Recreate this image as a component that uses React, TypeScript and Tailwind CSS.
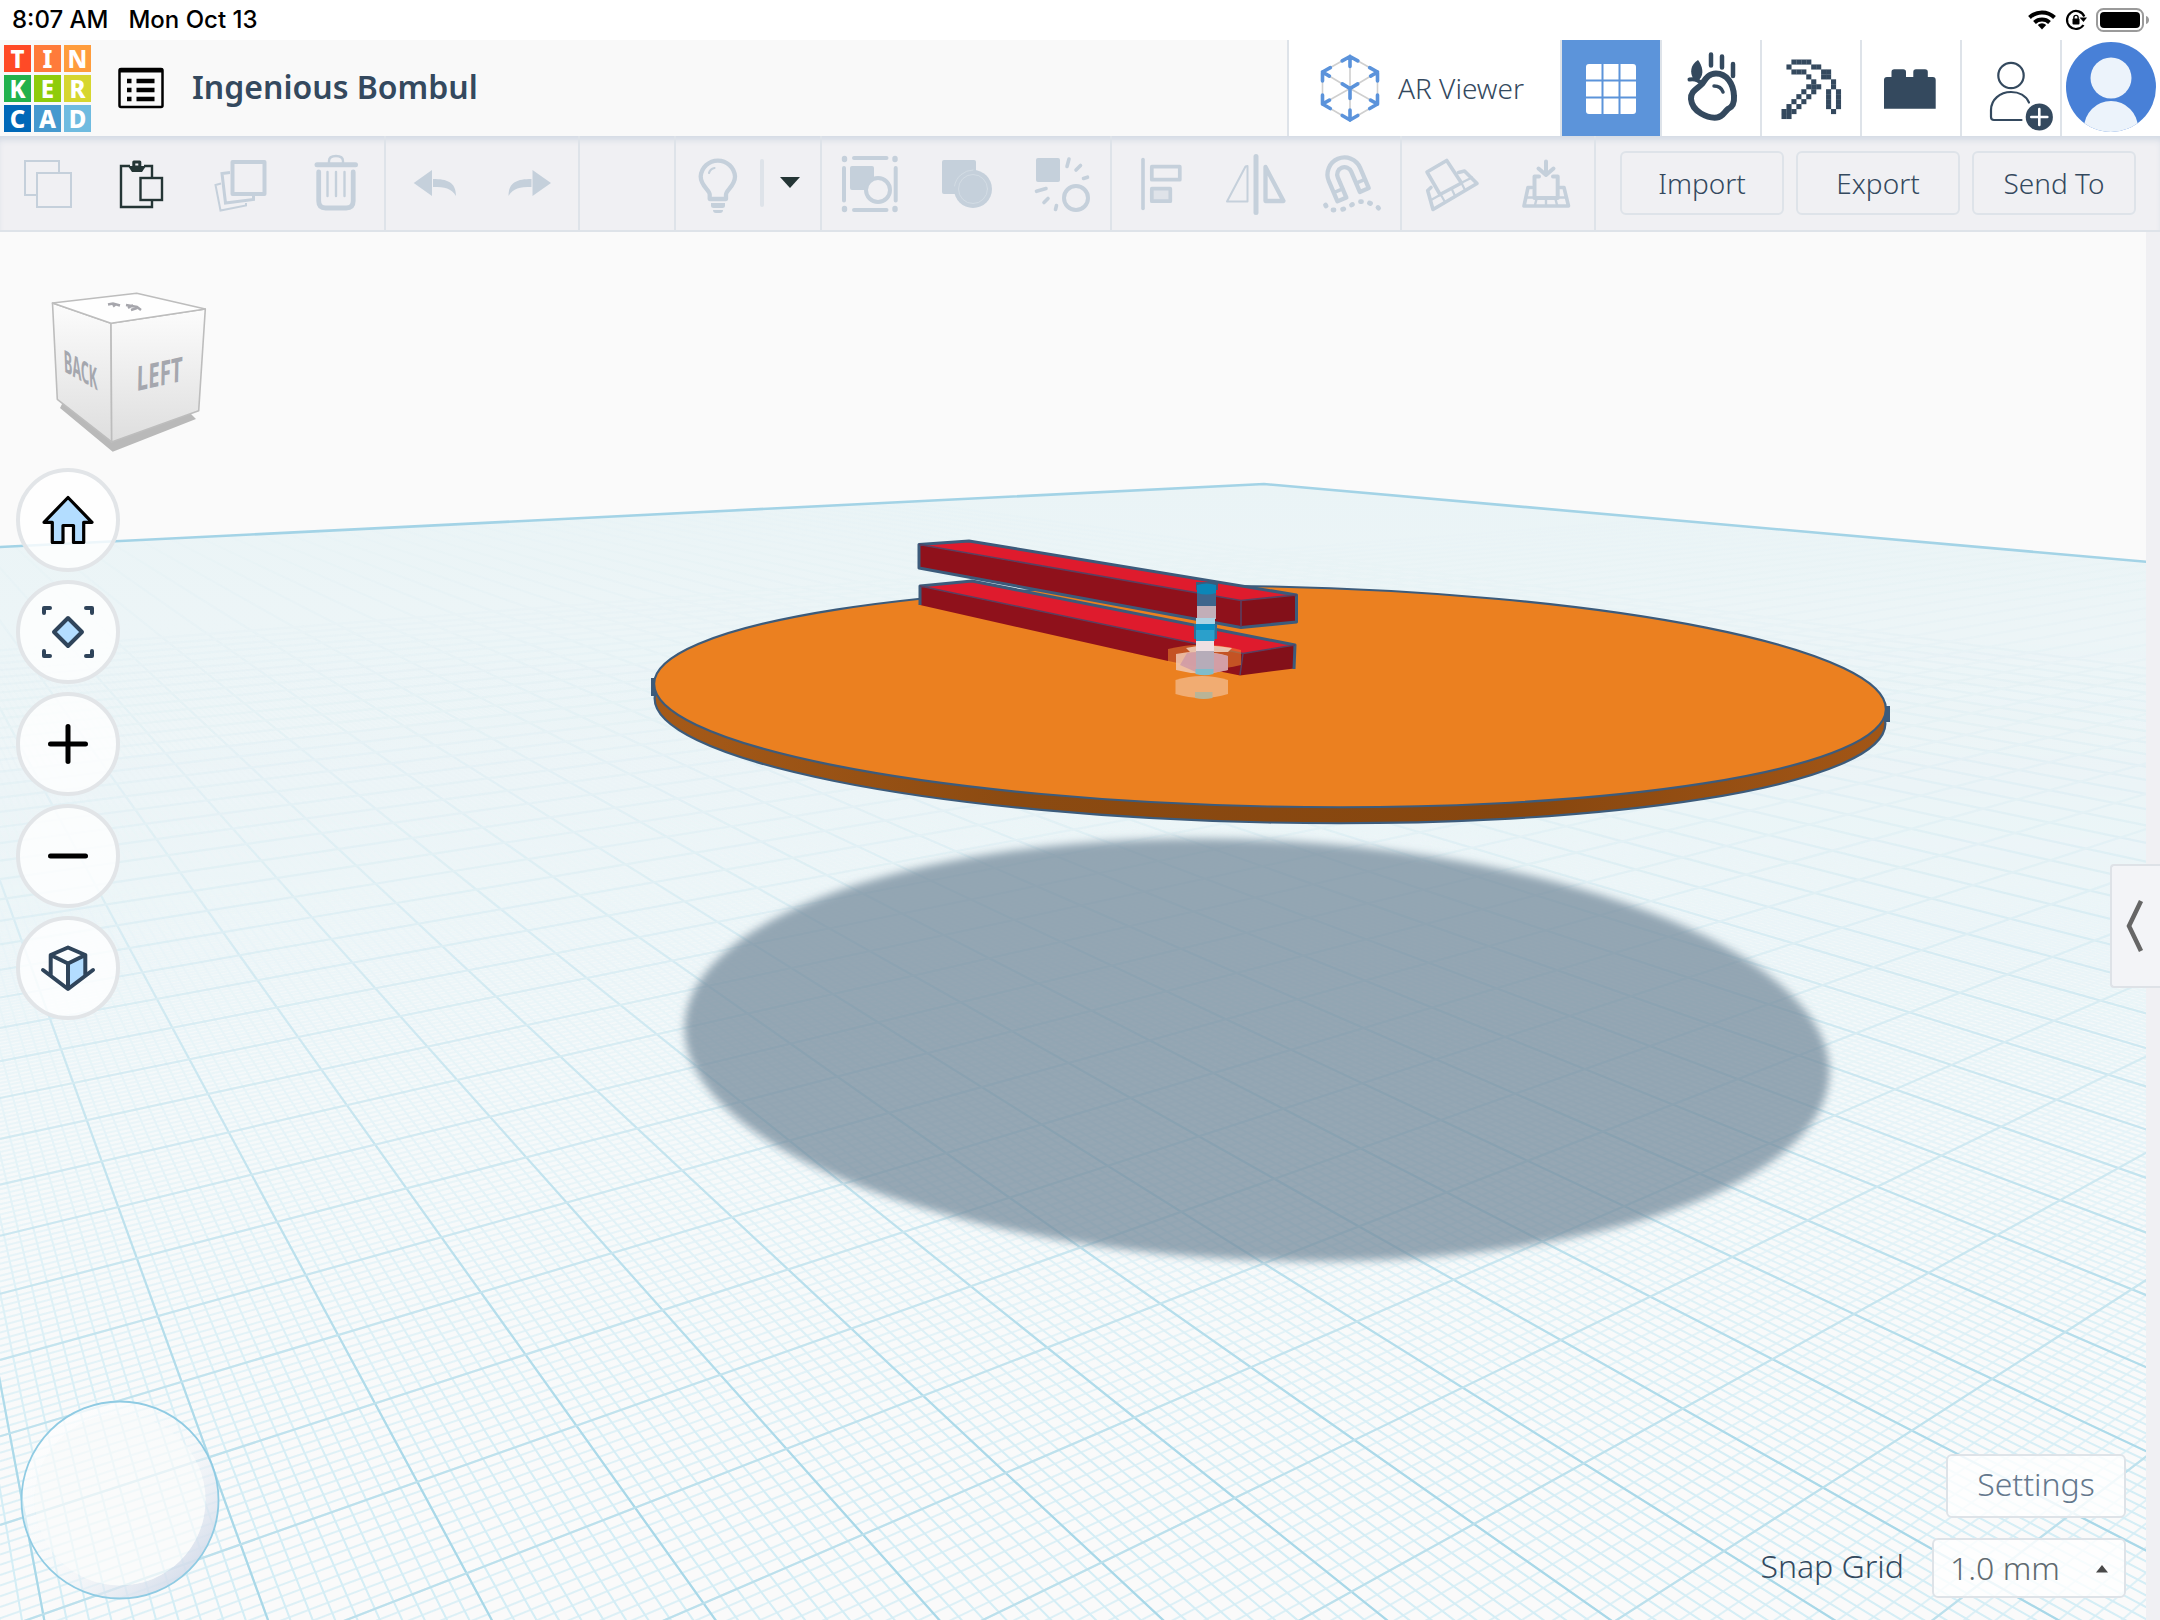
import type { ReactNode } from "react";

const MUTED = "#c5d0db";
const INK = "#34495e";

/* ---------- shared pieces ---------- */

type ArtProps = { box: string; w: string; children: ReactNode };

function Art({ box, w, children }: ArtProps) {
  return (
    <svg viewBox={box} className={w} fill="none" aria-hidden="true">
      {children}
    </svg>
  );
}

function Tool({ label, x, children }: { label: string; x: number; children: ReactNode }) {
  return (
    <button type="button" aria-label={label} className="flex h-full w-24 items-center justify-center">
      <Art box={`${x} 136 96 94`} w="w-24">
        <g stroke={MUTED} strokeLinecap="round" strokeLinejoin="round">
          {children}
        </g>
      </Art>
    </button>
  );
}

function ToolSection({ children }: { children?: ReactNode }) {
  return <div className="flex h-full shrink-0 border-r-2 border-[#dee3e9]">{children}</div>;
}

/* ---------- status bar ---------- */

function StatusBar() {
  return (
    <div className="flex h-10 shrink-0 items-center bg-white pr-2 pl-3 text-2xl font-medium text-black">
      <span>8:07 AM</span>
      <span className="ml-5">Mon Oct 13</span>
      <div className="ml-auto flex items-center">
        <Art box="2025 4 128 32" w="w-32">
          <g stroke="#000" strokeWidth="4">
            <path d="M2030.500 17.500a18 18 0 0 1 25 0" />
            <path d="M2035.500 22.500a11 11 0 0 1 15 0" />
          </g>
          <path d="M2043 29.500l-4.200-4.500a6 6 0 0 1 8.400 0z" fill="#000" />
          <path d="M2085.300 16.500a9 9 0 1 0-.8 8.500" stroke="#000" strokeWidth="2.200" />
          <path d="M2080.500 17.500h7.500l-3.500 4.500z" fill="#000" />
          <rect x="2073.500" y="18.500" width="7" height="6" rx="1" fill="#000" />
          <path d="M2074.900 19v-1.500a2.100 2.100 0 0 1 4.200 0v1.500" stroke="#000" strokeWidth="1.400" />
          <rect x="2098" y="9" width="46" height="22" rx="6.500" stroke="#9a9a9a" strokeWidth="2" />
          <rect x="2101" y="12" width="40" height="16" rx="4" fill="#000" />
          <path d="M2147 16c4 1 4 7 0 8z" fill="#9a9a9a" />
        </Art>
      </div>
    </div>
  );
}

/* ---------- header ---------- */

function Logo() {
  return (
    <a
      href="#home"
      aria-label="Tinkercad"
      className="grid shrink-0 grid-cols-3 gap-[3px] text-center text-2xl font-extrabold text-white"
    >
      <span className="h-[27px] w-[27px] bg-[#ff4a26] leading-[27px]">T</span>
      <span className="h-[27px] w-[27px] bg-[#ff7b3a] leading-[27px]">I</span>
      <span className="h-[27px] w-[27px] bg-[#ff9c3c] leading-[27px]">N</span>
      <span className="h-[27px] w-[27px] bg-[#22b14c] leading-[27px]">K</span>
      <span className="h-[27px] w-[27px] bg-[#8fcc0a] leading-[27px]">E</span>
      <span className="h-[27px] w-[27px] bg-[#d6d62f] leading-[27px]">R</span>
      <span className="h-[27px] w-[27px] bg-[#0068b8] leading-[27px]">C</span>
      <span className="h-[27px] w-[27px] bg-[#4599cf] leading-[27px]">A</span>
      <span className="h-[27px] w-[27px] bg-[#6fbbe0] leading-[27px]">D</span>
    </a>
  );
}

const HEX = [
  [1350, 58.5],
  [1377.5, 74],
  [1377.5, 106],
  [1350, 122],
  [1322.5, 106],
  [1322.5, 74],
];

function toward(a: number[], b: number[], d: number) {
  const len = Math.hypot(b[0] - a[0], b[1] - a[1]);
  return `M${a[0]} ${a[1]}L${a[0] + ((b[0] - a[0]) * d) / len} ${a[1] + ((b[1] - a[1]) * d) / len}`;
}

function ArIcon() {
  const c = [1350, 90.5];
  const frame = HEX.map((p, i) => `M${p[0]} ${p[1]}L${HEX[(i + 1) % 6][0]} ${HEX[(i + 1) % 6][1]}M${p[0]} ${p[1]}L${c[0]} ${c[1]}`);
  const stubs = HEX.flatMap((p, i) => [
    toward(p, HEX[(i + 1) % 6], 9),
    toward(p, HEX[(i + 5) % 6], 9),
    toward(p, c, i % 3 === 0 ? 10 : 8),
  ]);
  stubs.push(toward(c, HEX[5], 9), toward(c, HEX[1], 9), toward(c, HEX[3], 10));
  return (
    <Art box="1318 54 64 72" w="w-16">
      <path d={frame.join("")} stroke="#cfcfcf" strokeWidth="1.600" />
      <path d={stubs.join("")} stroke="#5b93db" strokeWidth="3.600" strokeLinecap="round" strokeLinejoin="round" />
    </Art>
  );
}

const PICKAXE = [
  "..####......",
  ".#....##....",
  "..###...##..",
  ".....#..##..",
  "......#...#.",
  ".....###..#.",
  "....#.#..#.#",
  "...#.#...#.#",
  "..#.#....#.#",
  ".#.#.....#.#",
  "###.......#.",
  "##..........",
];

function HeaderButton({ label, active, children }: { label: string; active?: boolean; children: ReactNode }) {
  return (
    <button
      type="button"
      aria-label={label}
      className={
        active
          ? "flex h-full w-[100px] items-center justify-center border-l-2 border-[#dee3e9] bg-[#5c94da]"
          : "flex h-full w-[100px] items-center justify-center border-l-2 border-[#dee3e9] bg-white"
      }
    >
      {children}
    </button>
  );
}

function Header() {
  return (
    <header className="flex h-24 shrink-0 items-center bg-[#f9f9f9] pl-1">
      <Logo />
      <button type="button" aria-label="My designs" className="ml-[27px] shrink-0">
        <Art box="118 64 46 42" w="w-[46px]">
          <rect x="119.500" y="66" width="43" height="38" rx="1.500" stroke="#000" strokeWidth="2.500" />
          <path d="M119 67.500h44" stroke="#000" strokeWidth="4" />
          <path d="M127 78h4.500M127 87h4.500M127 96h4.500M136.500 78h18M136.500 87h18M136.500 96h18" stroke="#000" strokeWidth="4.500" />
        </Art>
      </button>
      <h1 className="ml-7 pb-0.5 text-[32px] font-semibold text-[#34495e]">Ingenious Bombul</h1>

      <div className="ml-auto flex h-full bg-white">
        <button
          type="button"
          className="flex h-full w-[273px] items-center gap-4 border-l-2 border-[#dee3e9] bg-white pl-[29px] text-[28px] font-light text-[#34495e]"
        >
          <ArIcon />
          <span>AR Viewer</span>
        </button>

        <HeaderButton label="3D design" active>
          <Art box="1562 40 98 96" w="w-[98px]">
            <rect x="1586" y="64" width="50" height="50" rx="3" fill="#fff" />
            <path d="M1602.500 64v50M1619.500 64v50M1586 80.500h50M1586 97.500h50" stroke="#5c94da" strokeWidth="2" />
          </Art>
        </HeaderButton>

        <HeaderButton label="Sim lab">
          <Art box="1662 40 98 96" w="w-[98px]">
            <g stroke={INK} strokeLinecap="round">
              <path d="M1711 54.500v11M1722 56.500v11M1733 64v12" strokeWidth="4.500" />
              <path
                d="M1716 73.500C1708 73.500 1705 80 1702 84C1697 89 1690.500 91 1691 99C1692 112 1708 118.500 1717 117.500C1723 117 1724 112 1728 109C1733 107 1734.500 103 1734 96C1733.500 84 1727 73.500 1716 73.500Z"
                strokeWidth="6"
              />
              <path d="M1689.500 79.500Q1697 78 1702 84" strokeWidth="4" />
              <path d="M1714 86Q1721 86 1723 92" strokeWidth="3.500" />
            </g>
            <path d="M1698 60C1690 65 1690 73 1693 78L1699 80C1705 74 1702 65 1698 60Z" fill={INK} />
          </Art>
        </HeaderButton>

        <HeaderButton label="Blocks">
          <Art box="1762 40 98 96" w="w-[98px]">
            {PICKAXE.flatMap((row, r) =>
              row.split("").map((cell, c) =>
                cell === "#" ? <rect key={`${r}-${c}`} x={1781.5 + c * 4.95} y={59.5 + r * 4.95} width="5.100" height="5.100" fill={INK} /> : null,
              ),
            )}
          </Art>
        </HeaderButton>

        <HeaderButton label="Bricks">
          <Art box="1862 40 98 96" w="w-[98px]">
            <path
              d="M1884 108.700V80q0-3 3-3h4.500v-5q0-2.700 2.700-2.700h9q2.800 0 2.800 2.700v5h7.300v-5q0-2.700 2.700-2.700h9q2.800 0 2.800 2.700v5h5q2.900 0 2.900 3v28.700z"
              fill={INK}
            />
          </Art>
        </HeaderButton>

        <HeaderButton label="Invite people">
          <Art box="1962 40 98 96" w="w-[98px]">
            <g stroke={INK} strokeWidth="2.200" strokeLinecap="round">
              <circle cx="2011" cy="75.500" r="12.700" />
              <path d="M2021.500 120H1994q-3 0-3-3v-7C1991 99.500 2000 92 2011 92C2019 92 2026 96 2029 102.500" />
            </g>
            <circle cx="2039.300" cy="117" r="13.600" fill={INK} />
            <path d="M2039.300 109v16M2031.300 117h16" stroke="#fff" strokeWidth="2.600" strokeLinecap="round" />
          </Art>
        </HeaderButton>

        <HeaderButton label="Account">
          <Art box="2062 40 98 96" w="w-[98px]">
            <clipPath id="avatar">
              <circle cx="2111" cy="87" r="45" />
            </clipPath>
            <g clipPath="url(#avatar)">
              <rect x="2062" y="40" width="98" height="96" fill="#4880d7" />
              <circle cx="2111" cy="78" r="20.500" fill="#ecf3fb" />
              <ellipse cx="2111" cy="128" rx="27" ry="27" fill="#ecf3fb" />
            </g>
          </Art>
        </HeaderButton>
      </div>
    </header>
  );
}

/* ---------- toolbar ---------- */

function TextButton({ children }: { children: ReactNode }) {
  return (
    <button
      type="button"
      className="h-16 w-[164px] rounded-md border-2 border-[#dee3e9] text-[28px] font-light text-[#34495e]"
    >
      {children}
    </button>
  );
}

function Toolbar() {
  const F = MUTED;
  return (
    <div className="flex h-24 shrink-0 border-b-2 border-[#dee3e9] bg-[#f0f0f3] shadow-[inset_0_6px_6px_-2px_#d3dae4]">
      <ToolSection>
        <Tool label="Copy" x={0}>
          <g strokeWidth="2" strokeLinejoin="miter" strokeLinecap="butt">
            <path d="M36 195H25V161H59V172" />
            <rect x="37" y="173" width="34" height="34" />
          </g>
        </Tool>
        <Tool label="Paste" x={96}>
          <g stroke="#243535" strokeWidth="2.400" strokeLinejoin="miter" strokeLinecap="butt">
            <path d="M130 166H121V207H152V201M152 178V166H144" />
            <rect x="140.500" y="178" width="21.500" height="22" />
            <path d="M128 166H146L142 172H132Z" fill="#243535" stroke="none" />
            <rect x="133.800" y="162" width="6" height="5" fill="#f0f0f3" strokeWidth="3" strokeLinejoin="round" />
          </g>
        </Tool>
        <Tool label="Duplicate" x={192}>
          <rect x="232.500" y="162" width="32" height="32" strokeWidth="4" />
          <path d="M230 172.500L222 173.500L225.500 203L253.500 199.500V196" strokeWidth="3" strokeLinejoin="miter" strokeLinecap="butt" />
          <path d="M221 183.500L215.500 185L220.500 210.500L246 205.500V203" strokeWidth="2" strokeLinejoin="miter" strokeLinecap="butt" />
        </Tool>
        <Tool label="Delete" x={288}>
          <path d="M329 163V161q0-5 7-5t7 5v2" strokeWidth="2.400" />
          <path d="M317 164.700h38.500" strokeWidth="5" />
          <path d="M318.700 172v29q0 7 7 7h20.500q7 0 7-7V172" strokeWidth="4.800" />
          <path d="M327.500 172v24M336 172v24M344.500 172v24" strokeWidth="2.400" />
        </Tool>
      </ToolSection>
      <ToolSection>
        <Tool label="Undo" x={386}>
          <path d="M413.700 183L432 170V196Z" fill={F} stroke="none" />
          <path d="M433 179C447 179 456 182 456 196C451 188 445 187 433 187Z" fill={F} stroke="none" />
        </Tool>
        <Tool label="Redo" x={482}>
          <path d="M551 183L532.500 170V196Z" fill={F} stroke="none" />
          <path d="M531.500 179C517.500 179 508.500 182 508.500 196C513.500 188 519.500 187 531.500 187Z" fill={F} stroke="none" />
        </Tool>
      </ToolSection>
      <div className="h-full w-24 shrink-0 border-r-2 border-[#dee3e9]" />
      <ToolSection>
        <button type="button" aria-label="Show all" className="h-full">
          <Art box="676 136 84 94" w="w-[84px]">
            <g stroke={F} strokeLinecap="round" strokeLinejoin="round">
              <path
                d="M709.700 199V194.500C709.700 190 700.700 186 700.700 176.500A17.200 17.200 0 0 1 735 176.500C735 186 726 190 726 194.500V199Z"
                strokeWidth="4.300"
              />
              <path d="M709 173Q710 169 714.500 168" strokeWidth="2.200" />
            </g>
            <path d="M711 203h14v2.500q0 2.500-2.500 2.500h-9q-2.500 0-2.500-2.500zM713 210h10q0 3-3 3h-4q-3 0-3-3z" fill={F} />
          </Art>
        </button>
        <span className="h-12 w-1 self-center rounded-full bg-[#dee3e9]" />
        <button type="button" aria-label="Show options" className="h-full">
          <Art box="764 136 56 94" w="w-14">
            <path d="M780 177H800L790 188Z" fill="#243535" />
          </Art>
        </button>
      </ToolSection>
      <ToolSection>
        <Tool label="Group objects" x={822}>
          <path d="M844 168v32.500M895.700 168v32.500M854 158h32.500M854 210h32.500" strokeWidth="4" />
          <path d="M844.500 158.500v1M895 158.500v1M844.500 208.500v1M895 208.500v1" strokeWidth="5.400" />
          <rect x="850" y="166" width="24" height="24" rx="2" fill={F} stroke="none" />
          <circle cx="878" cy="190" r="12" strokeWidth="4" fill="#f0f0f3" />
        </Tool>
        <Tool label="Union" x={918}>
          <rect x="942" y="160" width="34" height="34" rx="2" fill={F} stroke="none" />
          <circle cx="973" cy="189" r="19" fill={F} stroke="none" />
          <circle cx="973" cy="189" r="14.500" stroke="#d6dee6" strokeWidth="0.800" />
          <path d="M954.500 186A19 19 0 0 1 973 170" stroke="#d6dee6" strokeWidth="0.800" />
        </Tool>
        <Tool label="Ungroup" x={1014}>
          <rect x="1036" y="158" width="24" height="24" rx="2" fill={F} stroke="none" />
          <circle cx="1076" cy="198" r="12" strokeWidth="4" />
          <path
            d="M1069 159L1067 166.500M1080.500 165.500L1076 170M1087.500 177.200L1083.500 178.500M1036.500 191.300L1046 188.500M1048 198.500L1044 202.500M1056.500 205.500L1055.500 209.500"
            strokeWidth="3.600"
          />
        </Tool>
      </ToolSection>
      <ToolSection>
        <Tool label="Align" x={1112}>
          <path d="M1143 159.500v49" strokeWidth="3.600" />
          <rect x="1151.800" y="166.700" width="28" height="13" strokeWidth="3.700" />
          <rect x="1151.800" y="188.700" width="18.500" height="12.500" strokeWidth="3.700" fill="#dfe3e9" />
        </Tool>
        <Tool label="Mirror" x={1208}>
          <path d="M1256 156.500v56" strokeWidth="5" />
          <path d="M1245.500 166.500L1247.500 166V201.500H1227Z" strokeWidth="2" />
          <path d="M1265.500 167V201H1283.500Z" strokeWidth="4.300" />
        </Tool>
        <Tool label="Snap" x={1304}>
          <g transform="translate(1344.500 174.500) rotate(-23)">
            <path d="M-17 22V0A17 17 0 0 1 17 0V22H7.300V0A7.300 7.300 0 0 0-7.300 0V22Z" strokeWidth="4.300" />
            <path d="M-17 12.500H-7.300M7.300 12.500H17" strokeWidth="3.500" />
          </g>
          <path
            d="M1325.500 205l.6 1M1333 210h1M1342.700 209.300l1-.4M1351.500 205l1-.6M1360.500 201.700h1M1369.500 203l1 .5M1378 207.500l.6.6"
            strokeWidth="4.800"
          />
        </Tool>
      </ToolSection>
      <ToolSection>
        <Tool label="Workplane" x={1402}>
          <path d="M1427 172L1446.700 160.500L1461.500 183L1440 194.500Z" strokeWidth="3.600" />
          <path d="M1431 187.500L1427.700 190.500L1433 209.500L1477 183.500L1464.500 171L1458.500 172.500" strokeWidth="3.600" />
          <path
            d="M1430 200.500L1440 195M1461 183L1472 177.500M1441 195L1445 202M1452 189.500L1455 196M1461.500 183L1465 190"
            strokeWidth="2.200"
          />
        </Tool>
        <Tool label="Drop to workplane" x={1498}>
          <path d="M1539 176.500H1534.500V198H1557.700V176.500H1553" strokeWidth="4" />
          <path d="M1546 161.500V174M1538.500 168.500L1546 175L1553.500 168.500" strokeWidth="4" />
          <path d="M1532 187.500H1528L1524 206H1568.500L1564 187.500H1560" strokeWidth="3.600" />
          <path d="M1526 197.500H1534M1558 197.500H1566M1536.500 199L1535 205M1546 199V205M1555.500 199L1557 205" strokeWidth="2.400" />
        </Tool>
      </ToolSection>
      <div className="ml-auto flex items-center gap-3 pr-6">
        <TextButton>Import</TextButton>
        <TextButton>Export</TextButton>
        <TextButton>Send To</TextButton>
      </div>
    </div>
  );
}

/* ---------- 3D scene ---------- */

// Vanishing points of the two grid directions.
const VA = { x: -191, y: 354 };
const VB = { x: 3565, y: 369 };

// Lines through VA, evenly spaced where they cross y = 1300.
function lineA(k: number) {
  const x = 152 + 167.2 * k;
  const t = 1.45;
  return `M${VA.x} ${VA.y}L${(VA.x + (x - VA.x) * t).toFixed(1)} ${(VA.y + (1300 - VA.y) * t).toFixed(1)}`;
}

// Lines through VB, evenly spaced in inverse depth where they cross x = 0.
function lineB(k: number) {
  const y = 354 + 1 / (0.000854 + 0.00007 * k);
  return `M${VB.x} ${VB.y}L0 ${y.toFixed(1)}`;
}

function range(from: number, to: number, step: number) {
  const out: number[] = [];
  for (let i = from; i <= to; i += step) out.push(i);
  return out;
}

const MINOR_A = range(-12, 330, 1).map((i) => lineA(i / 10)).join("");
const MINOR_B = range(-80, 220, 1).map((i) => lineB(i / 10)).join("");
const MAJOR_A = range(-1, 40, 1).map(lineA).join("");
const MAJOR_B = range(-8, 36, 1).map(lineB).join("");

function Scene() {
  const edge = "#3c5b7b";
  return (
    <svg
      viewBox="0 232 2146 1388"
      preserveAspectRatio="xMidYMid slice"
      className="absolute inset-0 h-full w-full"
      fill="none"
      aria-hidden="true"
    >
      <defs>
        <linearGradient id="plane" gradientUnits="userSpaceOnUse" x1="0" y1="480" x2="0" y2="1500">
          <stop offset="0" stopColor="#eaf4f6" />
          <stop offset="0.300" stopColor="#eff6f8" />
          <stop offset="0.600" stopColor="#f5f9fa" />
          <stop offset="1" stopColor="#fafafa" />
        </linearGradient>
        <linearGradient id="fadeMinor" gradientUnits="userSpaceOnUse" x1="0" y1="620" x2="0" y2="1500">
          <stop offset="0" stopColor="#fff" stopOpacity="0" />
          <stop offset="0.300" stopColor="#fff" stopOpacity="0.150" />
          <stop offset="0.650" stopColor="#fff" stopOpacity="0.450" />
          <stop offset="1" stopColor="#fff" stopOpacity="0.850" />
        </linearGradient>
        <linearGradient id="fadeMajor" gradientUnits="userSpaceOnUse" x1="0" y1="540" x2="0" y2="1500">
          <stop offset="0" stopColor="#fff" stopOpacity="0.020" />
          <stop offset="0.300" stopColor="#fff" stopOpacity="0.160" />
          <stop offset="0.600" stopColor="#fff" stopOpacity="0.500" />
          <stop offset="1" stopColor="#fff" stopOpacity="1" />
        </linearGradient>
        <mask id="maskMinor" maskUnits="userSpaceOnUse" x="0" y="232" width="2146" height="1388">
          <rect x="0" y="232" width="2146" height="1388" fill="url(#fadeMinor)" />
        </mask>
        <mask id="maskMajor" maskUnits="userSpaceOnUse" x="0" y="232" width="2146" height="1388">
          <rect x="0" y="232" width="2146" height="1388" fill="url(#fadeMajor)" />
        </mask>
        <filter id="soft" x="-5%" y="-10%" width="110%" height="120%">
          <feGaussianBlur stdDeviation="4" />
        </filter>
        <linearGradient id="rim" x1="0" y1="0" x2="1" y2="0">
          <stop offset="0" stopColor="#a65a18" />
          <stop offset="0.300" stopColor="#8b4a11" />
          <stop offset="0.700" stopColor="#86460f" />
          <stop offset="1" stopColor="#a25616" />
        </linearGradient>
        <clipPath id="planeClip">
          <path d="M-10 547.500L1264 483.500L2160 563V1630H-10Z" />
        </clipPath>
      </defs>

      <rect x="0" y="232" width="2146" height="1388" fill="#fafafa" />
      <g clipPath="url(#planeClip)">
        <rect x="0" y="470" width="2146" height="1150" fill="url(#plane)" />
        <g mask="url(#maskMinor)" stroke="#cdebf4" strokeWidth="2">
          <path d={MINOR_A} />
          <path d={MINOR_B} strokeOpacity="0.750" />
        </g>
        <g mask="url(#maskMajor)">
          <path d={MAJOR_A} stroke="#a9d8e8" strokeWidth="2.200" />
          <path d={MAJOR_B} stroke="#bce0ec" strokeWidth="2.200" />
        </g>
      </g>
      <path d="M-10 547.500L1264 484L2160 563" stroke="#a3d3e6" strokeWidth="2.600" />

      <ellipse
        cx="1257"
        cy="1050"
        rx="573"
        ry="210"
        transform="rotate(2.500 1257 1050)"
        fill="#74899b"
        fillOpacity="0.740"
        filter="url(#soft)"
      />

      {/* disc */}
      <path d="M651 678h7v18h-7zM1883 706h7v16h-7z" fill={edge} />
      <ellipse cx="1270" cy="711" rx="615.500" ry="111.500" transform="rotate(1.200 1270 711)" fill="url(#rim)" stroke={edge} strokeWidth="2.200" />
      <ellipse cx="1270" cy="696.500" rx="616" ry="110" transform="rotate(1.200 1270 696.500)" fill="#eb8020" stroke={edge} strokeWidth="2.200" />

      {/* lower bar */}
      <g strokeLinejoin="round">
        <path d="M920 586L1243 653.500L1240 675.500L1168 661L920 605Z" fill="#8f111b" />
        <path d="M1243 653.500L1295 645L1294 668.500L1240 675.500Z" fill="#831019" />
        <path d="M920 586L972 581L1295 645L1243 653.500Z" fill="#df1b2d" />
        <path d="M920 605V586L972 581L1295 645L1294 669" stroke={edge} strokeWidth="3" />
        <path d="M920 586L1243 653.500L1295 645M1243 653.500L1240 675" stroke="#5a3f60" strokeWidth="1.500" />
      </g>

      {/* upper bar */}
      <g strokeLinejoin="round">
        <path d="M919 544.500L1241 600.500V627.500L919 568Z" fill="#8f111b" />
        <path d="M1241 600.500L1296.500 595V622L1241 627.500Z" fill="#831019" />
        <path d="M919 544.500L969 541L1296.500 595L1241 600.500Z" fill="#df1b2d" />
        <path d="M919 544.500L969 541L1296.500 595V622L1241 627.500L919 568Z" stroke={edge} strokeWidth="3" />
        <path d="M919 544.500L1241 600.500L1296.500 595M1241 600.500V627" stroke="#5a3f60" strokeWidth="1.600" />
      </g>

      {/* washers and pin */}
      <path d="M1168 649Q1205 640 1241 650V665Q1205 674 1168 662Z" fill="#f08a2c" fillOpacity="0.550" />
      <path d="M1186 648Q1205 643 1232 648L1228 652H1190Z" fill="#f3dccb" fillOpacity="0.800" />
      <path d="M1176 654Q1202 648 1228 656V670Q1202 677 1176 670Z" fill="#f1c9b4" fillOpacity="0.850" />
      <path d="M1187 653Q1205 650 1228 656V670Q1210 674 1198 673L1180 665Z" fill="#cf9aa6" fillOpacity="0.850" />
      <path d="M1175.500 680Q1202 672 1228 680V694Q1202 702 1175.500 694Z" fill="#f1ac72" />
      <path d="M1196 582h22v8h-22z" fill={edge} />
      <path d="M1197 585h19v22h-19z" fill="#3f658c" />
      <path d="M1197 585q9.500-3 19 0v8q-9.500 3-19 0z" fill="#0b86b8" />
      <path d="M1197 606h19v13h-19z" fill="#c2aeb8" />
      <path d="M1196 618h19v7h-19z" fill="#a9d3e4" />
      <path d="M1194 624h23v15h-23z" fill="#2f6f96" />
      <path d="M1196 625h18.500v16H1196z" fill="#2ba0cb" />
      <path d="M1196 624h18.500v6H1196z" fill="#0891c6" />
      <path d="M1196 641h18v10h-18z" fill="#efdfe2" />
      <path d="M1196 651h18v18h-18z" fill="#b6acb9" />
      <path d="M1195.500 669h18v5q-9 2.500-18 0z" fill="#7fbccb" />
      <path d="M1195 692h17.500v6q-9 2-17.500 0z" fill="#b9b497" />
    </svg>
  );
}

/* ---------- stage overlays ---------- */

function ViewCube() {
  return (
    <svg viewBox="44 284 168 176" className="ml-11 w-[168px]" role="img" aria-label="View cube">
      <defs>
        <linearGradient id="face" x1="0" y1="0" x2="0" y2="1">
          <stop offset="0" stopColor="#fcfcfc" />
          <stop offset="1" stopColor="#dedede" />
        </linearGradient>
      </defs>
      <path d="M60 408L112.700 451.700L196 419L190 413L112 440L63 402Z" fill="#b9b9b9" />
      <g stroke="#bdbdbd" strokeWidth="1.600" strokeLinejoin="round">
        <path d="M52.500 303L111 323.300L111.700 442L57.300 399.300Z" fill="url(#face)" />
        <path d="M205.300 309L111 323.300L111.700 442L198.700 410.700Z" fill="url(#face)" />
        <path d="M52.500 303L136.700 293.300L205.300 309L111 323.300Z" fill="#fefefe" />
      </g>
      <path d="M108 304.500l5-1l7 2M116 304l-3 2.500M126 305l11 2l4 3M131 310l6-2M133 305l-5 3" stroke="#a6a6ac" strokeWidth="2.400" fill="none" />
      <g fill="#a5a7ae" className="font-bold" textAnchor="middle">
        <text transform="matrix(0.600 -0.130 -0.020 1 159.500 386)" fontSize="34">
          LEFT
        </text>
        <text transform="matrix(0.410 0.230 0.040 1 81 381)" fontSize="31">
          BACK
        </text>
      </g>
    </svg>
  );
}

function RoundButton({ label, y, children }: { label: string; y: number; children: ReactNode }) {
  return (
    <button
      type="button"
      aria-label={label}
      className="flex h-[104px] w-[104px] items-center justify-center rounded-full border-4 border-[#e2e5e8] bg-white/80"
    >
      <Art box={`20 ${y + 4} 96 96`} w="w-24">
        <g strokeLinecap="round" strokeLinejoin="round">
          {children}
        </g>
      </Art>
    </button>
  );
}

function Joystick() {
  return (
    <svg viewBox="20 1400 200 200" className="ml-5 w-[200px]" role="img" aria-label="Orbit control">
      <defs>
        <linearGradient id="ring" x1="0.100" y1="0.100" x2="0.850" y2="0.850">
          <stop offset="0" stopColor="#fff" stopOpacity="0.800" />
          <stop offset="0.550" stopColor="#f6f9fb" stopOpacity="0.400" />
          <stop offset="1" stopColor="#d5ddeb" stopOpacity="0.900" />
        </linearGradient>
      </defs>
      <path
        d="M120 1401.500a98.500 98.500 0 1 1 0 197a98.500 98.500 0 1 1 0-197zM120 1414.500a85.500 85.500 0 1 0 0 171a85.500 85.500 0 1 0 0-171z"
        fill="url(#ring)"
      />
      <circle cx="120" cy="1500" r="85.500" fill="#f9fbfb" fillOpacity="0.700" />
      <circle cx="120" cy="1500" r="98.500" fill="none" stroke="#8fcbe3" strokeWidth="1.800" />
    </svg>
  );
}

function Stage() {
  const slate = "#2f445a";
  return (
    <main className="relative flex min-h-0 flex-1">
      <div className="relative min-w-0 flex-1 overflow-hidden">
        <Scene />
        <div className="relative flex h-full justify-between">
          <div className="flex flex-col pt-[52px] pb-5">
            <ViewCube />
            <div className="mt-2 ml-4 flex flex-col gap-2">
              <RoundButton label="Home view" y={468}>
                <path
                  d="M68 497.500L92 522.300H83.700V542.500H73.500V525.500H63V542.500H52.300V522.300H44Z"
                  fill="#b3ddff"
                  stroke="#000"
                  strokeWidth="3.200"
                />
              </RoundButton>
              <RoundButton label="Fit view" y={580}>
                <path d="M44 613V608H50M86 608H92V613M44 651V656H50M86 656H92V651" stroke={slate} strokeWidth="4" />
                <path d="M68 618L82 632L68 646L54 632Z" fill="#b3ddff" stroke={slate} strokeWidth="4" />
              </RoundButton>
              <RoundButton label="Zoom in" y={692}>
                <path d="M50.500 744H85.500M68 726.500V761.500" stroke="#000" strokeWidth="5" />
              </RoundButton>
              <RoundButton label="Zoom out" y={804}>
                <path d="M50.500 856H85.500" stroke="#000" strokeWidth="5" />
              </RoundButton>
              <RoundButton label="Perspective view" y={916}>
                <path d="M68 963.500L85 955V975L68 988.500Z" fill="#b3ddff" />
                <path
                  d="M68 947.500L85.300 955L68 963.500L50.700 955ZM50.700 955V975M85.300 955V975M68 963.500V988M43 970L68 989L93 970"
                  stroke={slate}
                  strokeWidth="4"
                />
              </RoundButton>
            </div>
            <div className="mt-auto">
              <Joystick />
            </div>
          </div>

          <div className="mt-auto flex flex-col items-end gap-5 pr-5 pb-[22px] text-[32px] font-light">
            <button
              type="button"
              className="h-16 w-[180px] rounded-md border-2 border-[#dee3e8] bg-white/80 pb-1 text-[#64788d]"
            >
              Settings
            </button>
            <div className="flex items-center gap-7">
              <label htmlFor="snap" className="pb-1 text-[#34495e]">
                Snap Grid
              </label>
              <div className="relative">
                <select
                  id="snap"
                  defaultValue="1.0"
                  className="h-[60px] w-[194px] appearance-none rounded-md border-2 border-[#dee3e8] bg-white/80 pl-4 text-[#5f6a70]"
                >
                  <option value="1.0">1.0 mm</option>
                </select>
                <svg viewBox="0 0 12 8" className="pointer-events-none absolute top-[27px] right-[18px] w-3" aria-hidden="true">
                  <path d="M6 0L12 7.500H0Z" fill="#4a4a4a" />
                </svg>
              </div>
            </div>
          </div>
        </div>
      </div>
      <div className="w-[14px] shrink-0 bg-[#f0f0f3]" />
      <button
        type="button"
        aria-label="Open shapes panel"
        className="absolute top-[632px] right-0 flex h-[124px] w-[50px] items-center justify-center rounded-l-sm border-y-2 border-l-2 border-[#dee2e7] bg-[#f3f4f7]"
      >
        <svg viewBox="0 0 20 56" className="w-5" fill="none" aria-hidden="true">
          <path d="M15 3L3 28L15 53" stroke="#666" strokeWidth="4.500" />
        </svg>
      </button>
    </main>
  );
}

export default function App() {
  return (
    <div className="flex h-screen flex-col overflow-hidden bg-white font-['Noto_Sans','Open_Sans',sans-serif]">
      <div className="font-['Inter',sans-serif]">
        <StatusBar />
      </div>
      <Header />
      <Toolbar />
      <Stage />
    </div>
  );
}
